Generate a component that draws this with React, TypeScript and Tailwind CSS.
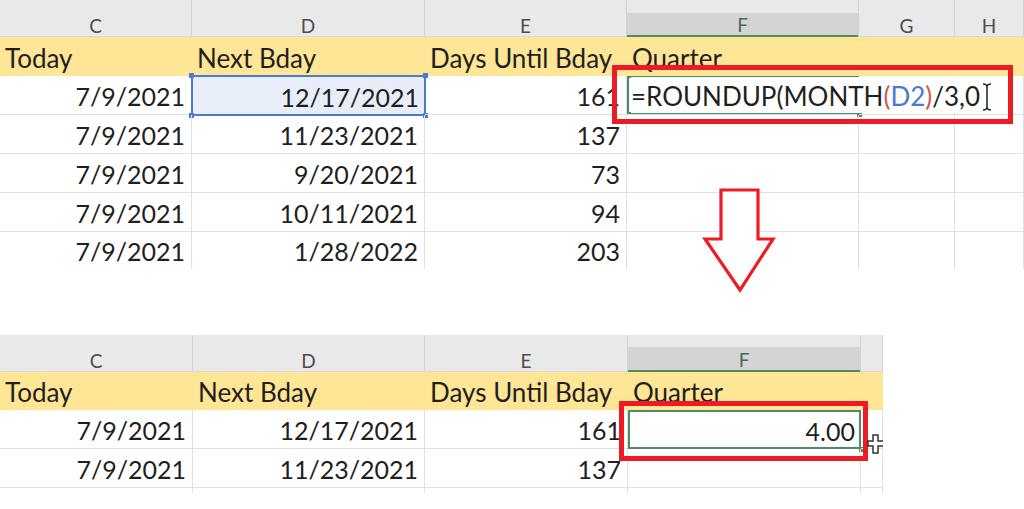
import React from "react";

type Col = { letter: string; w: string };

const topCols: Col[] = [
  { letter: "C", w: "w-[192px]" },
  { letter: "D", w: "w-[233px]" },
  { letter: "E", w: "w-[202px]" },
  { letter: "F", w: "w-[232px]" },
  { letter: "G", w: "w-[96px]" },
  { letter: "H", w: "w-[69px]" },
];

const bottomCols: Col[] = [
  { letter: "C", w: "w-[193px]" },
  { letter: "D", w: "w-[232px]" },
  { letter: "E", w: "w-[203px]" },
  { letter: "F", w: "w-[233px]" },
  { letter: "", w: "w-[22px]" },
];

const headers = ["Today", "Next Bday", "Days Until Bday", "Quarter"];

const topRows = [
  ["7/9/2021", "12/17/2021", "161"],
  ["7/9/2021", "11/23/2021", "137"],
  ["7/9/2021", "9/20/2021", "73"],
  ["7/9/2021", "10/11/2021", "94"],
  ["7/9/2021", "1/28/2022", "203"],
];

const bottomRows = [
  ["7/9/2021", "12/17/2021", "161"],
  ["7/9/2021", "11/23/2021", "137"],
];

// header strip with column letters; F gets the "active column" look
const LetterRow = ({ cols, hiTop }: { cols: Col[]; hiTop: string }) => (
  <div className="flex h-[37px] bg-[#e9e9e9]">
    {cols.map((c) =>
      c.letter === "F" ? (
        <div key={c.letter} className={`${c.w} shrink-0 flex flex-col border-r border-[#d3d3d3]`}>
          <div className={hiTop} />
          <div className="flex-1 flex items-end justify-center pb-[1px] bg-[#d4d4d4] border-b-2 border-[#4f8a62] text-[19px] leading-none text-[#4b6b57]">
            {c.letter}
          </div>
        </div>
      ) : (
        <div
          key={c.letter || "x"}
          className={`${c.w} shrink-0 flex items-end justify-center pb-[1px] border-r border-[#d3d3d3] border-b border-b-[#d9d9d9] text-[19px] leading-none text-[#4d4d4d]`}
        >
          {c.letter}
        </div>
      )
    )}
  </div>
);

const HeadRow = ({ cols, h }: { cols: Col[]; h: string }) => (
  <div className={`flex ${h} bg-[#ffe596]`}>
    {cols.map((c, i) => (
      <div
        key={i}
        className={`${c.w} shrink-0 flex items-end pl-[5px] pb-[5px] text-[26px] leading-none text-[#1f1f1f] whitespace-nowrap`}
      >
        {headers[i] ?? ""}
      </div>
    ))}
  </div>
);

const Handle = ({ pos }: { pos: string }) => (
  <div className={`absolute ${pos} w-[5px] h-[5px] bg-[#4a7bd0]`} />
);

function Cell({ w, text, extra }: { w: string; text?: string; extra?: React.ReactNode }) {
  return (
    <div
      className={`${w} shrink-0 relative flex items-end justify-end pr-[6px] pb-[5px] border-r border-b border-[#e0e0e0] text-[25px] leading-none text-[#1f1f1f]`}
    >
      {text}
      {extra}
    </div>
  );
}

const IBeam = () => (
  <svg width="10" height="28" viewBox="0 0 10 28" className="absolute left-[355px] bottom-[3px] z-20">
    <path d="M1 1 Q5 1 5 4 L5 24 Q5 27 1 27 M9 1 Q5 1 5 4 M5 24 Q5 27 9 27" fill="none" stroke="#2b2b2b" strokeWidth="1.6" />
  </svg>
);

function TopSheet() {
  return (
    <div className="relative h-[269px] overflow-hidden">
      <LetterRow cols={topCols} hiTop="h-[13px]" />
      <HeadRow cols={topCols} h="h-[39px]" />
      {topRows.map((r, ri) => (
        <div key={ri} className={`flex ${ri === 4 ? "h-[38px]" : "h-[39px]"}`}>
          <Cell w={topCols[0].w} text={r[0]} />
          {ri === 0 ? (
            <div className={`${topCols[1].w} shrink-0 relative flex items-end justify-end pr-[6px] pb-[5px] bg-[#e7eef9] text-[25px] leading-none text-[#1f1f1f]`}>
              {r[1]}
              <div className="absolute -left-px -top-px -right-px -bottom-px border-2 border-[#4a7bd0]" />
              <Handle pos="-left-[3px] -top-[3px]" />
              <Handle pos="-left-[3px] -bottom-[3px]" />
              <Handle pos="-right-[3px] -top-[3px]" />
              <Handle pos="-right-[3px] -bottom-[3px]" />
            </div>
          ) : (
            <Cell w={topCols[1].w} text={r[1]} />
          )}
          <Cell w={topCols[2].w} text={r[2]} />
          {ri === 0 ? (
            <div className={`${topCols[3].w} shrink-0 relative border-b border-[#e0e0e0]`}>
              <div className="absolute inset-0 border-2 border-[#4f8a62]" />
              <div className="absolute right-[-3px] bottom-[-3px] w-[5px] h-[5px] bg-[#4f8a62]" />
              <div className="absolute left-[4px] top-[1px] bottom-[1px] flex items-end pb-[4px] pr-[2px] bg-white z-10 whitespace-nowrap text-[26px] leading-none text-[#1f1f1f]">
                <span>=ROUNDUP(MONTH</span>
                <span className="text-[#d0574f]">(</span>
                <span className="text-[#4a7bd0]">D2</span>
                <span className="text-[#d0574f]">)</span>
                <span>/3,0</span>
              </div>
              <IBeam />
            </div>
          ) : (
            <Cell w={topCols[3].w} />
          )}
          <Cell w={topCols[4].w} />
          <Cell w={topCols[5].w} />
        </div>
      ))}
      <div className="absolute left-[612px] top-[65px] w-[401px] h-[59px] border-[5px] border-[#ed1c24] z-30" />
    </div>
  );
}

function BottomSheet() {
  return (
    <div className="relative w-[883px] h-[158px] overflow-hidden">
      <LetterRow cols={bottomCols} hiTop="h-[12px]" />
      <HeadRow cols={bottomCols} h="h-[38px]" />
      {bottomRows.map((r, ri) => (
        <div key={ri} className="flex h-[39px]">
          <Cell w={bottomCols[0].w} text={r[0]} />
          <Cell w={bottomCols[1].w} text={r[1]} />
          <Cell w={bottomCols[2].w} text={r[2]} />
          {ri === 0 ? (
            <div className={`${bottomCols[3].w} shrink-0 relative flex items-end justify-end pr-[6px] pb-[5px] text-[25px] leading-none text-[#1f1f1f]`}>
              4.00
              <div className="absolute inset-0 border-2 border-[#4f8a62]" />
              <div className="absolute right-[-3px] bottom-[-3px] w-[5px] h-[5px] bg-[#4f8a62]" />
            </div>
          ) : (
            <Cell w={bottomCols[3].w} />
          )}
          <Cell w={bottomCols[4].w} />
        </div>
      ))}
      <div className="flex h-[5px]">
        {bottomCols.map((c, i) => (
          <div key={i} className={`${c.w} shrink-0 border-r border-[#e0e0e0]`} />
        ))}
      </div>
      <div className="absolute left-[619px] top-[66px] w-[249px] h-[60px] border-[5px] border-[#ed1c24] z-30" />
      {/* fill/move cursor */}
      <svg width="18" height="20" viewBox="0 0 18 20" className="absolute left-[867px] top-[99px] z-30">
        <path d="M6 1 H11 V7 H17 V12 H11 V19 H6 V12 H1 V7 H6 Z" fill="white" stroke="#333" strokeWidth="1.5" />
      </svg>
    </div>
  );
}

export default function App() {
  return (
    <div className="relative w-[1024px] h-[509px] bg-white overflow-hidden font-['Lato','Open_Sans',sans-serif]">
      <TopSheet />
      <div className="h-[66px]" />
      <BottomSheet />
      <svg width="74" height="106" viewBox="0 0 74 106" className="absolute left-[702px] top-[188px] z-40">
        <path d="M19 2 H56 V51 H71 L38 102 L3 51 H19 Z" fill="white" stroke="#ed1c24" strokeWidth="3.2" strokeLinejoin="miter" />
      </svg>
    </div>
  );
}
